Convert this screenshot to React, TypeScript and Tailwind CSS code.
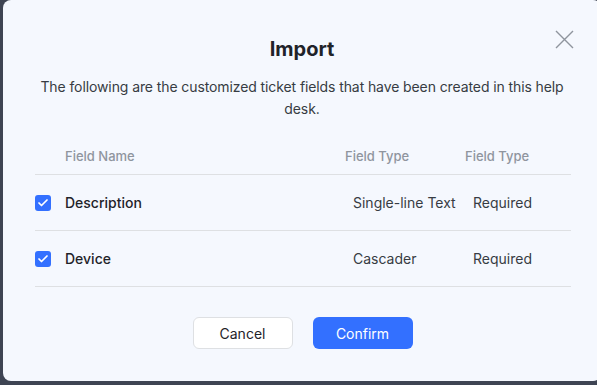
import { Check } from 'lucide-react'

const fields = [
  { name: 'Description', type: 'Single-line Text', rule: 'Required' },
  { name: 'Device', type: 'Cascader', rule: 'Required' },
]

export default function App() {
  return (
    <div
      className="h-[385px] w-[597px] overflow-hidden bg-[#3e4453] pl-[3px]"
      style={{ fontFamily: 'Inter, "Noto Sans", sans-serif' }}
    >
      <div className="relative h-[381px] w-[598px] rounded-lg bg-[#f5f8fe]">
        {/* Close */}
        <button className="absolute left-[552px] top-[30px] text-[#8f959e]">
          <svg width="19" height="19" viewBox="0 0 19 19" fill="none" stroke="currentColor" strokeWidth="1.4">
            <path d="M1 1L18 18M18 1L1 18" />
          </svg>
        </button>

        <div className="flex flex-col items-center pt-[35px]">
          <h1 className="text-[20px] font-bold leading-[28px] text-[#1f2329]">Import</h1>
          <p className="mt-[13px] w-[550px] text-center text-[14px] leading-[22px] tracking-[-0.1px] text-[#373c43]">
            The following are the customized ticket fields that have been created in this help desk.
          </p>
        </div>

        {/* Table */}
        <div className="ml-[32px] mt-[21px] w-[536px] text-[14px]">
          <div className="grid h-[34px] grid-cols-[30px_280px_120px_1fr] items-center border-b border-[#dee0e3] pb-[1px] text-[13px] font-medium text-[#8f959e]">
            <div />
            <div>Field Name</div>
            <div>Field Type</div>
            <div>Field Type</div>
          </div>
          {fields.map((f) => (
            <div
              key={f.name}
              className="grid h-[56px] grid-cols-[30px_280px_120px_1fr] items-center border-b border-[#dee0e3] text-[#1f2329]"
            >
              <div className="flex h-4 w-4 items-center justify-center rounded-[3px] bg-[#3370ff]">
                <Check className="h-3 w-3 text-white" strokeWidth={3.5} />
              </div>
              <div className="font-medium">{f.name}</div>
              <div className="pl-2 text-[#373c43]">{f.type}</div>
              <div className="pl-2 text-[#373c43]">{f.rule}</div>
            </div>
          ))}
        </div>

        {/* Footer */}
        <div className="mt-[30px] flex justify-center gap-5 pl-[1px]">
          <button className="h-8 w-[100px] rounded-md border border-[#dee0e3] bg-white text-[14px] text-[#1f2329]">
            Cancel
          </button>
          <button className="h-8 w-[100px] rounded-md bg-[#3370ff] text-[14px] text-white">
            Confirm
          </button>
        </div>
      </div>
    </div>
  )
}
